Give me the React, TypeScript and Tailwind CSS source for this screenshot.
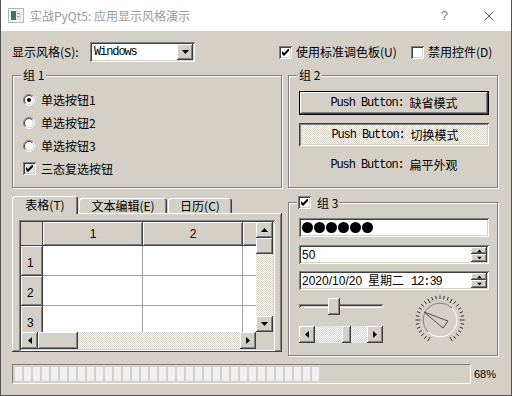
import React from 'react';

const raised = 'shadow-[inset_-1px_-1px_0_#404040,inset_1px_1px_0_#ffffff,inset_-2px_-2px_0_#808080]';
const sunken = 'shadow-[inset_1px_1px_0_#808080,inset_-1px_-1px_0_#ffffff,inset_2px_2px_0_#404040,inset_-2px_-2px_0_#d4d0c8]';
const pressed = 'shadow-[inset_1px_1px_0_#404040,inset_-1px_-1px_0_#ffffff,inset_2px_2px_0_#808080,inset_-2px_-2px_0_#d4d0c8]';
const checker = 'bg-[image:repeating-conic-gradient(#ffffff_0%_25%,#d4d0c8_0%_50%)] bg-[length:2px_2px]';
const mono = "font-['Liberation_Mono',monospace] text-[12px] tracking-[-1.1px]";
const sans = "font-['Liberation_Sans',sans-serif]";
const frame = 'relative border border-[#808080] shadow-[1px_1px_0_#ffffff,inset_1px_1px_0_#ffffff]';

type Dir = 'up' | 'down' | 'left' | 'right';

const Arrow = ({ dir, size = 7 }: { dir: Dir; size?: number }) => {
  const h = Math.ceil(size / 2);
  const pts = {
    up: `0,${h} ${size},${h} ${size / 2},0`,
    down: `0,0 ${size},0 ${size / 2},${h}`,
    left: `${h},0 ${h},${size} 0,${size / 2}`,
    right: `0,0 0,${size} ${h},${size / 2}`,
  }[dir];
  const vertical = dir === 'up' || dir === 'down';
  return (
    <svg width={vertical ? size : h} height={vertical ? h : size}>
      <polygon points={pts} fill="#000" />
    </svg>
  );
};

const ScrollBtn = ({ dir, className }: { dir: Dir; className: string }) => (
  <div className={`shrink-0 flex items-center justify-center bg-[#d4d0c8] ${raised} ${className}`}>
    <Arrow dir={dir} />
  </div>
);

const CheckBox = ({ checked, tri }: { checked?: boolean; tri?: boolean }) => (
  <div className={`w-[13px] h-[13px] shrink-0 flex items-center justify-center ${tri ? checker : 'bg-white'} ${sunken}`}>
    {checked && (
      <svg width="7" height="7" viewBox="0 0 7 7">
        <polygon points="0,2 2,4 7,-1 7,2 2,7 0,5" fill="#000" />
      </svg>
    )}
  </div>
);

const Radio = ({ checked }: { checked?: boolean }) => (
  <svg width="12" height="12" viewBox="0 0 12 12" className="shrink-0">
    <circle cx="6" cy="6" r="5" fill="#fff" />
    <path d="M2.1 9.9 A5.5 5.5 0 0 1 9.9 2.1" stroke="#808080" fill="none" />
    <path d="M9.9 2.1 A5.5 5.5 0 0 1 2.1 9.9" stroke="#ffffff" fill="none" />
    <path d="M2.8 9.2 A4.5 4.5 0 0 1 9.2 2.8" stroke="#404040" fill="none" />
    <path d="M9.2 2.8 A4.5 4.5 0 0 1 2.8 9.2" stroke="#d4d0c8" fill="none" />
    {checked && <circle cx="6" cy="6" r="2" fill="#000" />}
  </svg>
);

const AppIcon = () => (
  <svg width="16" height="16" viewBox="0 0 16 16">
    <rect x="0.5" y="0.5" width="15" height="14" fill="#f4f4f4" stroke="#b8b8b8" />
    <rect x="3" y="3" width="5" height="9" fill="#3d6f7c" />
    <rect x="8" y="3" width="5" height="9" fill="#dfe6e8" />
    <rect x="9" y="5" width="3" height="1" fill="#9aa6aa" />
    <rect x="9" y="8" width="3" height="1" fill="#9aa6aa" />
  </svg>
);

const Dial = () => {
  const cx = 27;
  const cy = 27;
  const ticks = [];
  for (let i = 0; i <= 30; i++) {
    const a = ((240 - i * 10) * Math.PI) / 180;
    const major = i % 6 === 0;
    const r1 = major ? 19.5 : 21;
    const r2 = 24.5;
    ticks.push(
      <line
        key={i}
        x1={cx + r1 * Math.cos(a)}
        y1={cy - r1 * Math.sin(a)}
        x2={cx + r2 * Math.cos(a)}
        y2={cy - r2 * Math.sin(a)}
        stroke="#303030"
        strokeWidth="1"
      />
    );
  }
  return (
    <svg width="54" height="54" viewBox="0 0 54 54">
      {ticks}
      <path d="M14.98 39.02 A17 17 0 0 1 39.02 14.98" stroke="#808080" fill="none" />
      <path d="M39.02 14.98 A17 17 0 0 1 14.98 39.02" stroke="#ffffff" fill="none" />
      <polygon points="11,19 35,28 30,35" fill="none" stroke="#505050" strokeWidth="1" />
    </svg>
  );
};

const HeaderCell = ({ label }: { label: string }) => (
  <div className={`w-[100px] h-[24px] shrink-0 flex items-center justify-center bg-[#d4d0c8] ${raised} ${sans}`}>{label}</div>
);

const TableRow = ({ n }: { n: number }) => (
  <div className="flex h-[30px] shrink-0">
    <div className={`w-[22px] h-[30px] shrink-0 flex items-center pl-[6px] pt-[3px] bg-[#d4d0c8] ${raised} ${sans}`}>{n}</div>
    <div className="w-[100px] shrink-0 bg-white border-r border-b border-[#a0a0a0]" />
    <div className="w-[100px] shrink-0 bg-white border-r border-b border-[#a0a0a0]" />
    <div className="w-[100px] shrink-0 bg-white border-r border-b border-[#a0a0a0]" />
  </div>
);

export default function App() {
  const chunks = Array.from({ length: 34 }, (_, i) => i);
  return (
    <div className="w-[512px] h-[396px] bg-[#d4d0c8] border-x border-b border-[#555555] flex flex-col overflow-hidden font-['Noto_Sans_CJK_SC',sans-serif] text-[12px] leading-[16px] text-black">
      {/* title bar */}
      <div className="h-[31px] shrink-0 bg-white flex items-center">
        <div className="ml-[7px] w-[16px] h-[16px]">
          <AppIcon />
        </div>
        <span className="ml-[6px] text-[#9a9a9a]">实战PyQt5: 应用显示风格演示</span>
        <span className={`ml-auto mr-[36px] text-[13px] text-[#808080] ${sans}`}>?</span>
        <svg width="10" height="10" viewBox="0 0 10 10" className="mr-[17px]">
          <path d="M0.5 0.5 L9.5 9.5 M9.5 0.5 L0.5 9.5" stroke="#606060" strokeWidth="1" />
        </svg>
      </div>

      <div className="flex flex-col pl-[11px]">
        {/* style row */}
        <div className="mt-[11px] h-[20px] flex items-center">
          <span className="w-[78px] shrink-0">显示风格(S):</span>
          <div className={`w-[105px] h-[20px] shrink-0 flex items-center bg-white p-[2px] ${sunken}`}>
            <span className={`flex-1 pl-[2px] ${mono}`}>Windows</span>
            <ScrollBtn dir="down" className="w-[16px] h-[16px]" />
          </div>
          <div className="ml-[84px] w-[132px] shrink-0 flex items-center gap-[4px]">
            <CheckBox checked />
            <span>使用标准调色板(U)</span>
          </div>
          <div className="flex items-center gap-[4px]">
            <CheckBox />
            <span>禁用控件(D)</span>
          </div>
        </div>

        {/* groups 1 & 2 */}
        <div className="mt-[13px] grid grid-cols-[270px_210px] gap-x-[6px]">
          <div className={`${frame} h-[113px]`}>
            <span className="absolute left-[8px] -top-[9px] px-[2px] bg-[#d4d0c8]">组 1</span>
            <div className="flex flex-col pt-[12px] pl-[10px]">
              <div className="h-[23px] flex items-center gap-[6px]">
                <Radio checked />
                <span>单选按钮1</span>
              </div>
              <div className="h-[23px] flex items-center gap-[6px]">
                <Radio />
                <span>单选按钮2</span>
              </div>
              <div className="h-[23px] flex items-center gap-[6px]">
                <Radio />
                <span>单选按钮3</span>
              </div>
              <div className="h-[23px] flex items-center gap-[5px]">
                <CheckBox checked tri />
                <span>三态复选按钮</span>
              </div>
            </div>
          </div>

          <div className={`${frame} h-[113px]`}>
            <span className="absolute left-[8px] -top-[9px] px-[2px] bg-[#d4d0c8]">组 2</span>
            <div className="flex flex-col pt-[15px] pl-[10px]">
              <div className="w-[190px] h-[24px] border border-black">
                <div className={`w-full h-full flex items-center justify-center bg-[#d4d0c8] ${raised}`}>
                  <span className={mono}>Push Button:</span>
                  <span className="ml-[6px]">缺省模式</span>
                </div>
              </div>
              <div className={`mt-[8px] w-[190px] h-[23px] flex items-center justify-center pt-[1px] pl-[2px] ${checker} ${pressed}`}>
                <span className={mono}>Push Button:</span>
                <span className="ml-[6px]">切换模式</span>
              </div>
              <div className="mt-[8px] w-[190px] h-[22px] flex items-center justify-center">
                <span className={mono}>Push Button:</span>
                <span className="ml-[6px]">扁平外观</span>
              </div>
            </div>
          </div>
        </div>

        {/* tabs & group 3 */}
        <div className="mt-[8px] grid grid-cols-[270px_210px] gap-x-[6px]">
          <div className="flex flex-col">
            <div className="h-[17px] flex items-end">
              <div className="relative z-10 -mb-[1px] w-[66px] h-[18px] flex items-center justify-center rounded-t-[3px] bg-[#d4d0c8] shadow-[inset_1px_1px_0_#ffffff,inset_-1px_0_0_#404040,inset_-2px_0_0_#808080]">
                表格(T)
              </div>
              <div className="ml-[1px] w-[88px] h-[15px] flex items-center justify-center rounded-t-[3px] shadow-[inset_1px_1px_0_#ffffff,inset_-1px_0_0_#404040,inset_-2px_0_0_#808080]">
                文本编辑(E)
              </div>
              <div className="ml-[1px] w-[64px] h-[15px] flex items-center justify-center rounded-t-[3px] shadow-[inset_1px_1px_0_#ffffff,inset_-1px_0_0_#404040,inset_-2px_0_0_#808080]">
                日历(C)
              </div>
            </div>
            <div className={`h-[139px] pt-[7px] pl-[7px] bg-[#d4d0c8] ${raised}`}>
              <div className={`w-[256px] h-[131px] p-[2px] bg-white ${sunken}`}>
                <div className="grid grid-cols-[235px_17px] grid-rows-[110px_17px] w-[252px] h-[127px]">
                  <div className="overflow-hidden flex flex-col bg-white">
                    <div className="flex h-[24px] shrink-0">
                      <div className="w-[22px] h-[24px] shrink-0 bg-[#d4d0c8] shadow-[inset_-1px_-1px_0_#404040]" />
                      <HeaderCell label="1" />
                      <HeaderCell label="2" />
                      <HeaderCell label="" />
                    </div>
                    <TableRow n={1} />
                    <TableRow n={2} />
                    <TableRow n={3} />
                  </div>
                  <div className="flex flex-col">
                    <ScrollBtn dir="up" className="w-[17px] h-[16px]" />
                    <div className={`w-[17px] h-[16px] shrink-0 bg-[#d4d0c8] ${raised}`} />
                    <div className={`flex-1 ${checker}`} />
                    <ScrollBtn dir="down" className="w-[17px] h-[16px]" />
                  </div>
                  <div className="flex">
                    <ScrollBtn dir="left" className="w-[17px] h-[17px]" />
                    <div className={`w-[40px] h-[17px] shrink-0 bg-[#d4d0c8] ${raised}`} />
                    <div className={`flex-1 ${checker}`} />
                    <ScrollBtn dir="right" className="w-[16px] h-[17px]" />
                  </div>
                  <div className="bg-[#d4d0c8]" />
                </div>
              </div>
            </div>
          </div>

          <div className={`${frame} mt-[6px] h-[154px]`}>
            <div className="absolute left-[8px] -top-[7px] h-[13px] flex items-center gap-[6px] px-[1px] bg-[#d4d0c8]">
              <CheckBox checked />
              <span>组 3</span>
            </div>
            <div className="flex flex-col pt-[15px] pl-[10px]">
              <div className={`w-[190px] h-[19px] flex items-center gap-[1px] pl-[3px] bg-white ${sunken}`}>
                {[0, 1, 2, 3, 4, 5].map((i) => (
                  <div key={i} className="w-[11px] h-[11px] rounded-full bg-black" />
                ))}
              </div>
              <div className={`mt-[8px] w-[190px] h-[19px] flex items-center p-[2px] bg-white ${sunken}`}>
                <span className={`flex-1 pl-[1px] ${sans}`}>50</span>
                <div className="flex flex-col">
                  <ScrollBtn dir="up" className="w-[16px] h-[7px] [&_svg]:scale-[0.7]" />
                  <ScrollBtn dir="down" className="w-[16px] h-[8px] [&_svg]:scale-[0.7]" />
                </div>
              </div>
              <div className={`mt-[7px] w-[190px] h-[19px] flex items-center p-[2px] bg-white ${sunken}`}>
                <span className="flex-1 pl-[1px] whitespace-nowrap">
                  <span className={sans}>2020/10/20</span>
                  <span className="ml-[6px]">星期二</span>
                  <span className={`ml-[7px] ${mono}`}>12:39</span>
                </span>
                <div className="flex flex-col">
                  <ScrollBtn dir="up" className="w-[16px] h-[7px] [&_svg]:scale-[0.7]" />
                  <ScrollBtn dir="down" className="w-[16px] h-[8px] [&_svg]:scale-[0.7]" />
                </div>
              </div>
              <div className="flex">
                <div className="flex flex-col pt-[8px]">
                  <div className="relative w-[84px] h-[17px]">
                    <div className={`absolute left-0 right-0 top-[6px] h-[4px] ${sunken}`} />
                    <div className={`absolute left-[29px] top-0 w-[12px] h-[17px] bg-[#d4d0c8] ${raised}`} />
                  </div>
                  <div className="mt-[11px] w-[84px] h-[17px] flex">
                    <ScrollBtn dir="left" className="w-[16px] h-[17px]" />
                    <div className={`w-[27px] ${checker}`} />
                    <div className={`w-[9px] h-[17px] bg-[#d4d0c8] ${raised}`} />
                    <div className={`w-[16px] ${checker}`} />
                    <ScrollBtn dir="right" className="w-[16px] h-[17px]" />
                  </div>
                </div>
                <div className="ml-[30px] mt-[3px]">
                  <Dial />
                </div>
              </div>
            </div>
          </div>
        </div>

        {/* progress */}
        <div className="mt-[8px] h-[20px] flex items-center">
          <div className="w-[459px] h-[20px] flex gap-[2px] pl-[2px] pt-[2px] border-t border-l border-[#808080] border-b border-r border-b-white border-r-white">
            {chunks.map((i) => (
              <div key={i} className="w-[7px] h-[14px] bg-[#f0f0f0]" />
            ))}
          </div>
          <span className={`ml-[3px] text-[11px] ${sans}`}>68%</span>
        </div>
      </div>
    </div>
  );
}
